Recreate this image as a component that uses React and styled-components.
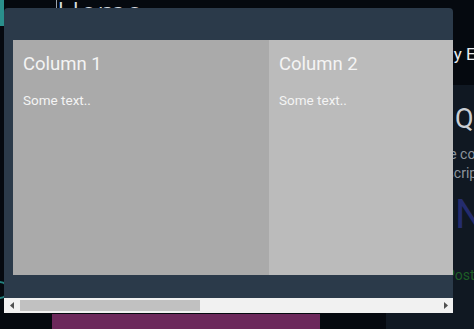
import React from 'react'
import styled, { createGlobalStyle } from 'styled-components'

const GlobalStyle = createGlobalStyle`
  html, body {
    margin: 0;
    padding: 0;
    background: #05090f;
    overflow: hidden;
  }
  body {
    font-family: Roboto, "Liberation Sans", sans-serif;
  }
`

const Page = styled.div`
  position: relative;
  width: 474px;
  height: 329px;
  overflow: hidden;
  display: grid;
  grid-template-columns: 52px 334px 1fr;
  background: #05090f;
`

const Sidebar = styled.div`
  display: flex;
  flex-direction: column;
  justify-content: space-between;
  padding: 0 0 30px 0;
`

const SideAccent = styled.div`
  width: 4px;
  height: 26px;
  background: #2a8f8c;
`

const SideRing = styled.div`
  width: 14px;
  height: 14px;
  margin-left: -9px;
  border: 2px solid #237f7d;
  border-radius: 50%;
`

const Main = styled.div`
  display: flex;
  flex-direction: column;
  justify-content: space-between;
`

const HomeTitle = styled.h1`
  margin: -6px 0 0 4px;
  font-size: 32px;
  font-weight: 300;
  color: #d6dbe0;
  border-left: 1px solid #9aa3ad;
  padding-left: 0;
  line-height: 1.2;
`

const PinkBar = styled.div`
  width: 268px;
  height: 15px;
  background: #6c285b;
`

const Aside = styled.div`
  display: flex;
  flex-direction: column;
  white-space: nowrap;
`

const AsideHead = styled.div`
  height: 85px;
  padding: 44px 0 0 53px;
  box-sizing: border-box;
  font-size: 17px;
  color: #e8ebee;
`

const Card = styled.div`
  flex: 1;
  background: #101822;
  padding: 18px 0 0 69px;
`

const CardTitle = styled.div`
  font-size: 27px;
  color: #c9ced4;
  line-height: 32px;
`

const CardLine = styled.div`
  font-size: 14px;
  color: #8d959e;
  line-height: 19px;
  margin-top: ${p => p.gap || 0}px;
  margin-left: ${p => p.shift || 0}px;
`

const CardBig = styled.div`
  font-size: 40px;
  color: #242c6e;
  margin-top: 10px;
  line-height: 44px;
`

const CardTag = styled.div`
  font-size: 14px;
  color: #1d5e26;
  margin: 30px 0 0 -9px;
`

const Panel = styled.div`
  position: absolute;
  left: 4px;
  top: 8px;
  width: 449px;
  height: 305px;
  background: #2b3a4a;
  border-radius: 4px 4px 0 0;
  display: flex;
  flex-direction: column;
  overflow: hidden;
`

const Viewport = styled.div`
  flex: 1;
  overflow: hidden;
`

const Row = styled.div`
  display: flex;
  padding: 32px 0 23px 9px;
  width: max-content;
`

const Column = styled.div`
  width: 256px;
  height: 235px;
  box-sizing: border-box;
  padding: 13px 10px;
  background: ${p => p.bg};
  color: #f4f4f4;
`

const ColTitle = styled.h2`
  margin: 0;
  font-size: 18.5px;
  font-weight: 400;
  line-height: 22px;
`

const ColText = styled.p`
  margin: 17px 0 0;
  font-size: 13.5px;
  line-height: 16px;
`

const ScrollTrack = styled.div`
  height: 15px;
  flex: none;
  background: #f1f1f1;
  display: flex;
  align-items: center;
`

const ScrollArrow = styled.div`
  width: 15px;
  height: 15px;
  flex: none;
  display: flex;
  align-items: center;
  justify-content: center;
`

const ScrollThumb = styled.div`
  height: 11px;
  background: #c1c1c1;
  margin-left: 1px;
`

const ScrollSpace = styled.div`
  flex: 1;
`

const Arrow = ({ dir }) => (
  <svg width="4" height="7" viewBox="0 0 4 7">
    {dir === 'left' ? (
      <polygon points="4,0 0,3.5 4,7" fill="#505050" />
    ) : (
      <polygon points="0,0 4,3.5 0,7" fill="#505050" />
    )}
  </svg>
)

const columns = [
  { title: 'Column 1', bg: '#aaaaaa' },
  { title: 'Column 2', bg: '#bbbbbb' },
  { title: 'Column 3', bg: '#cccccc' },
  { title: 'Column 4', bg: '#dddddd' }
]

export default function App() {
  return (
    <>
      <GlobalStyle />
      <Page>
        <Sidebar>
          <SideAccent />
          <SideRing />
        </Sidebar>
        <Main>
          <HomeTitle>Home</HomeTitle>
          <PinkBar />
        </Main>
        <Aside>
          <AsideHead>My Events</AsideHead>
          <Card>
            <CardTitle>Quick</CardTitle>
            <CardLine gap={10} shift={-28}>Take course</CardLine>
            <CardLine shift={-25}>Description</CardLine>
            <CardBig>New</CardBig>
            <CardTag>Posted</CardTag>
          </Card>
        </Aside>

        <Panel>
          <Viewport>
            <Row>
              {columns.map(c => (
                <Column key={c.title} bg={c.bg}>
                  <ColTitle>{c.title}</ColTitle>
                  <ColText>Some text..</ColText>
                </Column>
              ))}
            </Row>
          </Viewport>
          <ScrollTrack>
            <ScrollArrow>
              <Arrow dir="left" />
            </ScrollArrow>
            <ScrollThumb style={{ width: 180 }} />
            <ScrollSpace />
            <ScrollArrow>
              <Arrow dir="right" />
            </ScrollArrow>
          </ScrollTrack>
        </Panel>
      </Page>
    </>
  )
}
